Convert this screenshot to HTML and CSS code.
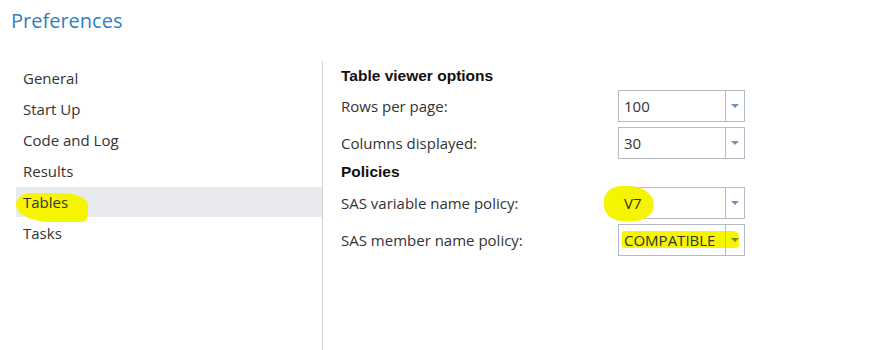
FILE: index.html
```html
<!DOCTYPE html>
<html>
<head>
<meta charset="utf-8">
<link rel="stylesheet" href="styles.css">
</head>
<body>
<div class="page">
  <h1 class="title">Preferences</h1>
  <div class="main">
    <nav class="nav">
      <div class="nav-item">General</div>
      <div class="nav-item">Start Up</div>
      <div class="nav-item">Code and Log</div>
      <div class="nav-item">Results</div>
      <div class="nav-item active"><span class="mark mark-tables">Tables</span></div>
      <div class="nav-item">Tasks</div>
    </nav>
    <section class="panel">
      <h2 class="section-title">Table viewer options</h2>
      <div class="row">
        <span class="label">Rows per page:</span>
        <div class="select"><span class="value">100</span><span class="arrow"></span></div>
      </div>
      <div class="row">
        <span class="label">Columns displayed:</span>
        <div class="select"><span class="value">30</span><span class="arrow"></span></div>
      </div>
      <h2 class="section-title policies">Policies</h2>
      <div class="row">
        <span class="label">SAS variable name policy:</span>
        <div class="select"><span class="value"><span class="mark mark-v7">V7</span></span><span class="arrow"></span></div>
      </div>
      <div class="row">
        <span class="label">SAS member name policy:</span>
        <div class="select marked"><span class="value">COMPATIBLE</span><span class="arrow"></span></div>
      </div>
    </section>
  </div>
</div>
</body>
</html>
```
FILE: styles.css
```css
html, body {
  margin: 0;
  padding: 0;
  background: #ffffff;
}
body {
  font-family: "Open Sans", Lato, sans-serif;
  color: #333333;
  width: 880px;
  height: 350px;
  overflow: hidden;
}
.page {
  display: flex;
  flex-direction: column;
}
.title {
  margin: 0;
  padding: 8px 0 0 11px;
  height: 53px;
  box-sizing: border-box;
  font-weight: 400;
  font-size: 20px;
  color: #2f7fc1;
  line-height: 26px;
}
.main {
  display: flex;
  height: 297px;
}
.nav {
  width: 306px;
  margin-left: 16px;
  margin-top: 8px;
  border-right: 1px solid #cfd3da;
  box-sizing: content-box;
  display: flex;
  flex-direction: column;
}
.nav-item {
  height: 31px;
  line-height: 31px;
  padding-left: 7px;
  font-size: 15px;
  color: #333333;
  position: relative;
  z-index: 0;
}
.nav-item:first-child {
  margin-top: 2px;
}
.nav-item.active {
  background: #e9eaee;
  height: 30px;
  line-height: 30px;
  margin-bottom: 1px;
}
.mark {
  position: relative;
  z-index: 0;
}
.mark::before {
  content: "";
  position: absolute;
  z-index: -1;
  background: #f6f500;
}
.mark-tables::before {
  left: -7px;
  right: -20px;
  top: 1px;
  bottom: -10px;
  border-radius: 14px 40% 6px 50% / 12px 40% 8px 60%;
}
.mark-v7::before {
  left: -20px;
  right: -12px;
  top: -7px;
  bottom: -8px;
  border-radius: 40% 55% 45% 40% / 45% 60% 50% 50%;
}
.panel {
  padding-left: 18px;
  padding-top: 12px;
  flex: 1;
}
.section-title {
  margin: 0;
  font-family: "Liberation Sans", Arial, sans-serif;
  font-weight: 700;
  font-size: 15.5px;
  color: #111111;
  line-height: 22px;
  height: 22px;
}
.section-title.policies {
  margin-top: 1px;
  height: 24px;
  line-height: 24px;
}
.row {
  display: flex;
  align-items: center;
  width: 404px;
  justify-content: space-between;
  margin-top: 5px;
}
.section-title + .row {
  margin-top: 3px;
}
.label {
  font-size: 15px;
  color: #333333;
}
.select {
  width: 127px;
  height: 32px;
  box-sizing: border-box;
  border: 1px solid #b5bac4;
  display: flex;
  align-items: stretch;
  position: relative;
  z-index: 0;
}
.select .value {
  flex: 1;
  padding-left: 5px;
  line-height: 30px;
  font-size: 15px;
  color: #333333;
  white-space: nowrap;
}
.select .arrow {
  width: 18px;
  border-left: 1px solid #b5bac4;
  display: flex;
  align-items: center;
  justify-content: center;
}
.select .arrow::after {
  content: "";
  border-left: 4px solid transparent;
  border-right: 4px solid transparent;
  border-top: 4px solid #6f93bf;
}
.select.marked::before {
  content: "";
  position: absolute;
  z-index: -1;
  left: 3px;
  right: 5px;
  top: 6px;
  bottom: 7px;
  background: #f6f500;
  border-radius: 3px 6px 4px 2px;
}
.select.marked .arrow::after {
  border-top-color: #6c8a1e;
}
```
